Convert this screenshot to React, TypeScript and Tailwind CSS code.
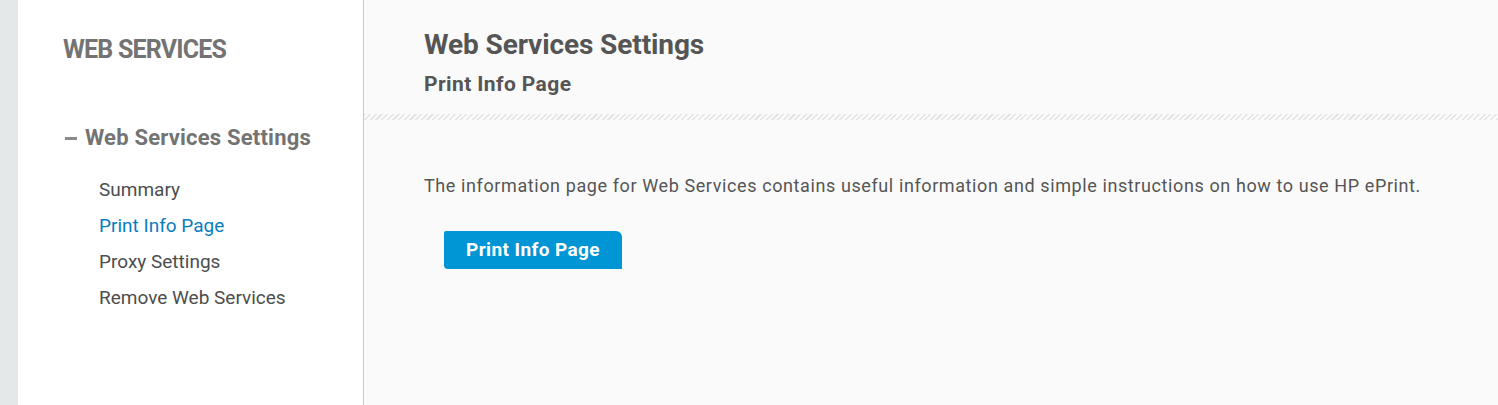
export default function App() {
  const links = [
    { label: 'Summary', active: false },
    { label: 'Print Info Page', active: true },
    { label: 'Proxy Settings', active: false },
    { label: 'Remove Web Services', active: false },
  ];

  return (
    <div className="flex h-[405px] w-full overflow-hidden font-['Roboto',sans-serif]">
      {/* left edge strip */}
      <div className="w-[18px] shrink-0 bg-[#e4e8e8]" />

      {/* sidebar */}
      <aside className="w-[346px] shrink-0 border-r border-[#c9c9c9] bg-white pl-[45px] pt-[35px]">
        <h2 className="text-[25px] font-bold leading-[30px] tracking-[-0.8px] text-[#737373]">
          WEB SERVICES
        </h2>
        <div className="mt-[58px] flex items-center text-[22px] font-bold leading-[30px] tracking-[0.2px] text-[#737373]">
          <span className="mr-[8px] ml-[2px] inline-block h-[3px] w-[12px] bg-[#8a8a8a]" />
          Web Services Settings
        </div>
        <ul className="mt-[19px] pl-[36px]">
          {links.map((l) => (
            <li
              key={l.label}
              className={`text-[19px] leading-[36px] ${l.active ? 'text-[#0a7cc1]' : 'text-[#4d4d4d]'}`}
            >
              {l.label}
            </li>
          ))}
        </ul>
      </aside>

      {/* main */}
      <main className="flex-1 bg-[#fafafa]">
        <div className="pl-[60px] pt-[28px]">
          <h1 className="text-[28px] font-bold leading-[34px] tracking-[-0.1px] text-[#555555]">
            Web Services Settings
          </h1>
          <h3 className="mt-[9px] text-[21px] font-bold leading-[26px] tracking-[0.4px] text-[#555555]">
            Print Info Page
          </h3>
        </div>
        <div className="mt-[17px] h-[6px] bg-[repeating-linear-gradient(135deg,#e4e4e4_0px,#e4e4e4_1.5px,transparent_1.5px,transparent_4px)]" />
        <div className="pl-[60px] pt-[53px]">
          <p className="text-[18px] leading-[26px] tracking-[0.6px] text-[#555555]">
            The information page for Web Services contains useful information and simple instructions on how to use HP ePrint.
          </p>
          <button className="ml-[20px] mt-[32px] flex h-[38px] w-[178px] items-center justify-center rounded-tr-[6px] rounded-bl-[4px] rounded-tl-[2px] bg-[#0096d6] text-[19px] font-bold tracking-[0.4px] text-white">
            Print Info Page
          </button>
        </div>
      </main>
    </div>
  );
}
